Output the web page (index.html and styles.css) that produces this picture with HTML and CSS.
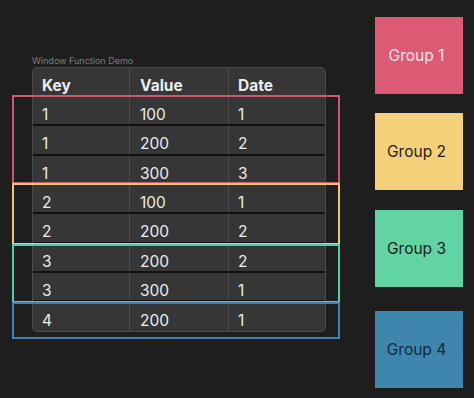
FILE: index.html
```html
<!DOCTYPE html>
<html>
<head>
<meta charset="utf-8">
<link rel="stylesheet" href="styles.css">
</head>
<body>
<div class="stage">
  <div class="left">
    <div class="title">Window Function Demo</div>
    <div class="table">
      <div class="row head"><div class="cell">Key</div><div class="cell">Value</div><div class="cell">Date</div></div>
      <div class="row r29"><div class="cell">1</div><div class="cell">100</div><div class="cell">1</div></div>
      <div class="row r30"><div class="cell">1</div><div class="cell">200</div><div class="cell">2</div></div>
      <div class="row r29"><div class="cell">1</div><div class="cell">300</div><div class="cell">3</div></div>
      <div class="row r29"><div class="cell">2</div><div class="cell">100</div><div class="cell">1</div></div>
      <div class="row r30"><div class="cell">2</div><div class="cell">200</div><div class="cell">2</div></div>
      <div class="row r29"><div class="cell">3</div><div class="cell">200</div><div class="cell">2</div></div>
      <div class="row r29"><div class="cell">3</div><div class="cell">300</div><div class="cell">1</div></div>
      <div class="row last"><div class="cell">4</div><div class="cell">200</div><div class="cell">1</div></div>
    </div>
  </div>
  <div class="groups">
    <div class="group g1">Group 1</div>
    <div class="group g2">Group 2</div>
    <div class="group g3">Group 3</div>
    <div class="group g4">Group 4</div>
  </div>
  <div class="hl hl-red"></div>
  <div class="hl hl-yellow"></div>
  <div class="hl hl-teal"></div>
  <div class="hl hl-blue"></div>
</div>
</body>
</html>
```
FILE: styles.css
```css
html, body {
  margin: 0;
  padding: 0;
  background: #1e1e1e;
}
body {
  width: 474px;
  height: 398px;
  overflow: hidden;
  font-family: Inter, "Liberation Sans", sans-serif;
}
.stage {
  position: relative;
  width: 474px;
  height: 398px;
  display: flex;
}
.left {
  margin-left: 32px;
  padding-top: 55px;
  width: 294px;
}
.title {
  font-size: 9px;
  line-height: 12px;
  color: #7c7c7c;
  white-space: nowrap;
}
.table {
  background: #363636;
  border: 1px solid #4a4a4a;
  border-radius: 5px;
  overflow: hidden;
  box-sizing: border-box;
  width: 294px;
}
.row {
  display: grid;
  grid-template-columns: 96px 99px 1fr;
  border-bottom: 2px solid #111111;
  box-sizing: border-box;
}
.row.head {
  height: 29px;
  font-weight: 700;
}
.row.r29 { height: 29px; }
.row.r30 { height: 30px; }
.row.last { height: 29px; border-bottom: none; }
.cell {
  display: flex;
  align-items: center;
  padding-left: 9px;
  padding-top: 7px;
  font-size: 15.5px;
  color: #ececec;
  border-left: 1px solid #4c4c4c;
}
.cell:first-child {
  border-left: none;
}
.row .cell:nth-child(2) { padding-left: 10px; }
.groups {
  margin-left: 49px;
  padding-top: 17px;
  display: flex;
  flex-direction: column;
  width: 88px;
}
.group {
  height: 77px;
  display: flex;
  align-items: center;
  justify-content: center;
  font-size: 15.5px;
  color: #1d1d1d;
  padding-right: 5px;
}
.g1 { background: #dc5a74; color: #fbe2e7; }
.g2 { background: #f5d07b; margin-top: 19px; }
.g3 { background: #62d3a3; margin-top: 20px; }
.g4 { background: #3e86ac; margin-top: 24px; color: #0f2a3f; }
.hl {
  position: absolute;
  left: 12px;
  width: 328px;
  box-sizing: border-box;
  border: 2px solid;
}
.hl-red { top: 95px; height: 89px; border-color: #c85b72; }
.hl-yellow { top: 183px; height: 62px; border-color: #f2c474; }
.hl-teal { top: 244px; height: 59px; border-color: #55c9ae; }
.hl-blue { top: 302px; height: 37px; border-color: #3d80b2; }
```
